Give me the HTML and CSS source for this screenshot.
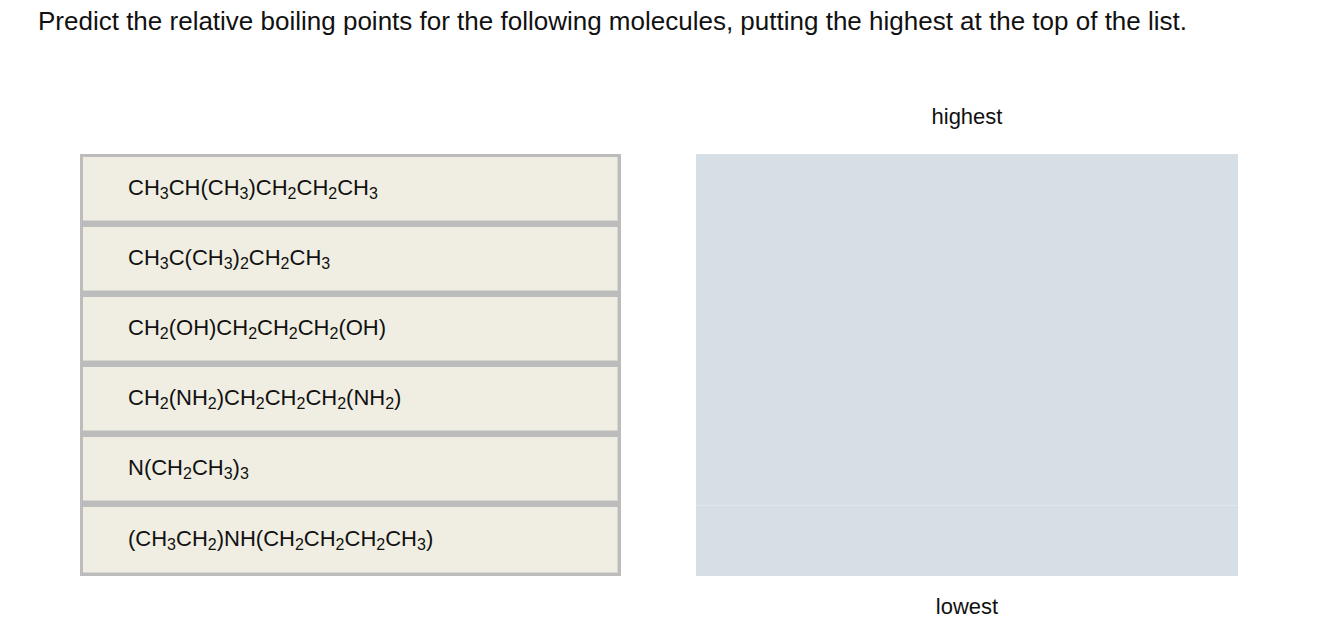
FILE: index.html
```html
<!DOCTYPE html>
<html lang="en">

<head>
  <meta charset="UTF-8">
  <title>Boiling points</title>
  <link rel="stylesheet" href="styles.css">
</head>

<body>
  <h1 class="prompt">Predict the relative boiling points for the following molecules, putting the highest at the top of the list.</h1>

  <div class="board">
    <div class="label top-label">highest</div>

    <div class="items">
      <div class="item"><span>CH<sub>3</sub>CH(CH<sub>3</sub>)CH<sub>2</sub>CH<sub>2</sub>CH<sub>3</sub></span></div>
      <div class="item"><span>CH<sub>3</sub>C(CH<sub>3</sub>)<sub>2</sub>CH<sub>2</sub>CH<sub>3</sub></span></div>
      <div class="item"><span>CH<sub>2</sub>(OH)CH<sub>2</sub>CH<sub>2</sub>CH<sub>2</sub>(OH)</span></div>
      <div class="item"><span>CH<sub>2</sub>(NH<sub>2</sub>)CH<sub>2</sub>CH<sub>2</sub>CH<sub>2</sub>(NH<sub>2</sub>)</span></div>
      <div class="item"><span>N(CH<sub>2</sub>CH<sub>3</sub>)<sub>3</sub></span></div>
      <div class="item"><span>(CH<sub>3</sub>CH<sub>2</sub>)NH(CH<sub>2</sub>CH<sub>2</sub>CH<sub>2</sub>CH<sub>3</sub>)</span></div>
    </div>

    <div class="target">
      <div class="slot"></div>
      <div class="slot last"></div>
    </div>

    <div class="label bottom-label">lowest</div>
  </div>
</body>

</html>
```

FILE: styles.css
```css
* {
  margin: 0;
  padding: 0;
  box-sizing: border-box;
}

body {
  font-family: "Liberation Sans", Arial, sans-serif;
  color: #111;
  background-color: white;
}

.prompt {
  font-size: 26px;
  font-weight: normal;
  padding: 6px 0 0 38px;
  line-height: 30px;
}

.board {
  display: grid;
  grid-template-columns: 541px 542px;
  grid-template-rows: 58px 422px 42px;
  column-gap: 75px;
  margin: 60px 0 0 80px;
}

.label {
  grid-column: 2;
  text-align: center;
  font-size: 22px;
}

.top-label {
  grid-row: 1;
  padding-top: 8px;
}

.bottom-label {
  grid-row: 3;
  padding-top: 18px;
}

.items {
  grid-column: 1;
  grid-row: 2;
  display: flex;
  flex-direction: column;
}

.item {
  height: 70px;
  border: 3px solid #bcbcbc;
  box-shadow: inset -1px -1px 0 #d6d6d0;
  background-color: #f0eee2;
  font-size: 22px;
  line-height: 26px;
  padding: 0 0 2px 45px;
  display: flex;
  align-items: center;
}

.item:last-child {
  height: 72px;
}

.item sub {
  font-size: 16px;
  vertical-align: -4px;
  line-height: 0;
}

.target {
  grid-column: 2;
  grid-row: 2;
  display: flex;
  flex-direction: column;
  background-color: #d5dfe5;
}

.slot {
  flex: 1;
}

.slot.last {
  flex: 0 0 71px;
  border-top: 1px solid #e0e8ed;
}
```
